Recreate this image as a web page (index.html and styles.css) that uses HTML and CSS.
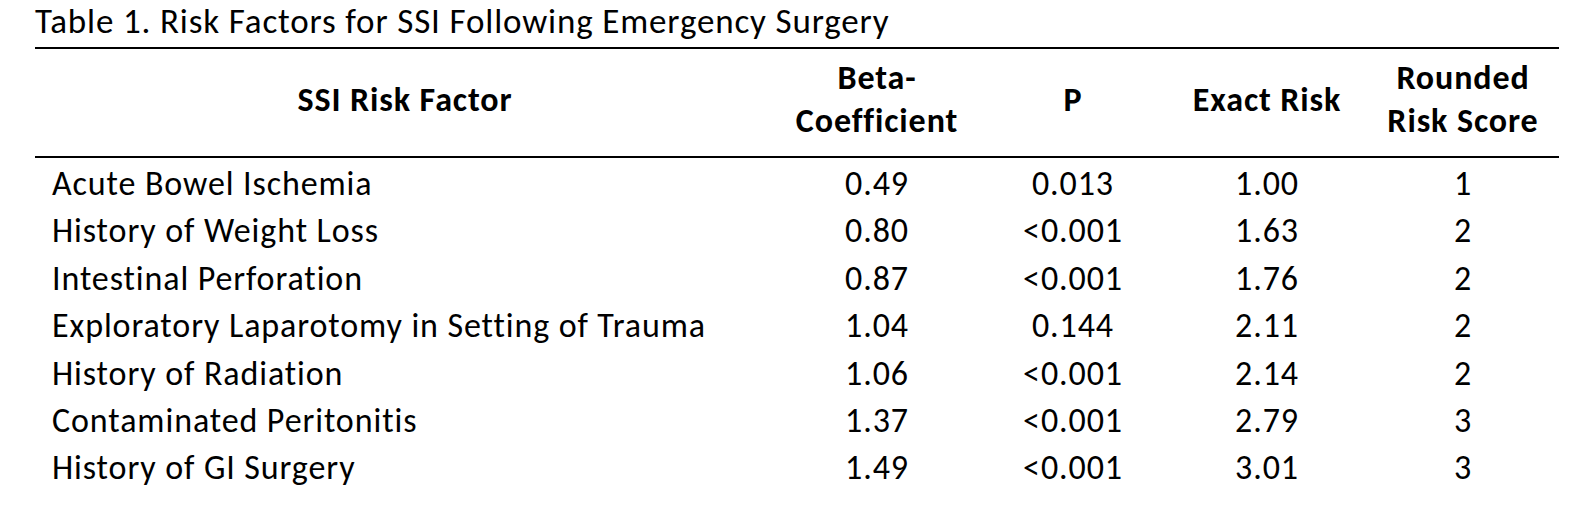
FILE: index.html
```html
<!DOCTYPE html>
<html>
<head>
<meta charset="utf-8">
<link rel="stylesheet" href="styles.css">
</head>
<body>
<div class="page">
  <div class="caption">Table 1. Risk Factors for SSI Following Emergency Surgery</div>
  <table class="risk">
    <colgroup>
      <col class="c1"><col class="c2"><col class="c3"><col class="c4"><col class="c5">
    </colgroup>
    <thead>
      <tr>
        <th>SSI Risk Factor</th>
        <th>Beta-<br>Coefficient</th>
        <th>P</th>
        <th>Exact Risk</th>
        <th>Rounded<br>Risk Score</th>
      </tr>
    </thead>
    <tbody>
      <tr><td class="label">Acute Bowel Ischemia</td><td>0.49</td><td>0.013</td><td>1.00</td><td>1</td></tr>
      <tr><td class="label">History of Weight Loss</td><td>0.80</td><td>&lt;0.001</td><td>1.63</td><td>2</td></tr>
      <tr><td class="label">Intestinal Perforation</td><td>0.87</td><td>&lt;0.001</td><td>1.76</td><td>2</td></tr>
      <tr><td class="label">Exploratory Laparotomy in Setting of Trauma</td><td>1.04</td><td>0.144</td><td>2.11</td><td>2</td></tr>
      <tr><td class="label">History of Radiation</td><td>1.06</td><td>&lt;0.001</td><td>2.14</td><td>2</td></tr>
      <tr><td class="label">Contaminated Peritonitis</td><td>1.37</td><td>&lt;0.001</td><td>2.79</td><td>3</td></tr>
      <tr><td class="label">History of GI Surgery</td><td>1.49</td><td>&lt;0.001</td><td>3.01</td><td>3</td></tr>
    </tbody>
  </table>
</div>
</body>
</html>
```
FILE: styles.css
```css
html, body {
  margin: 0;
  padding: 0;
  background: #ffffff;
}
body {
  font-family: Carlito, Lato, "Liberation Sans", sans-serif;
  color: #000;
}
.page {
  padding: 0 0 0 35px;
  width: 1524px;
}
.caption {
  font-size: 35px;
  letter-spacing: 0.85px;
  line-height: 42px;
  height: 47px;
  white-space: nowrap;
}
.risk {
  width: 1524px;
  table-layout: fixed;
  border-collapse: collapse;
  border-top: 2px solid #000;
  font-size: 34px;
  letter-spacing: 0.9px;
}
.risk .c1 { width: 740px; }
.risk .c2 { width: 204px; }
.risk .c3 { width: 188px; }
.risk .c4 { width: 200px; }
.risk .c5 { width: 192px; }
.risk thead th {
  font-weight: bold;
  line-height: 43px;
  padding: 7px 0 14px;
  border-bottom: 2px solid #000;
  text-align: center;
  vertical-align: middle;
  white-space: nowrap;
}
.risk td {
  text-align: center;
  line-height: 47.4px;
  padding: 0;
  white-space: nowrap;
}
.risk tbody tr:first-child td { padding-top: 2px; }
.risk td.label {
  text-align: left;
  padding-left: 17px;
}
```
